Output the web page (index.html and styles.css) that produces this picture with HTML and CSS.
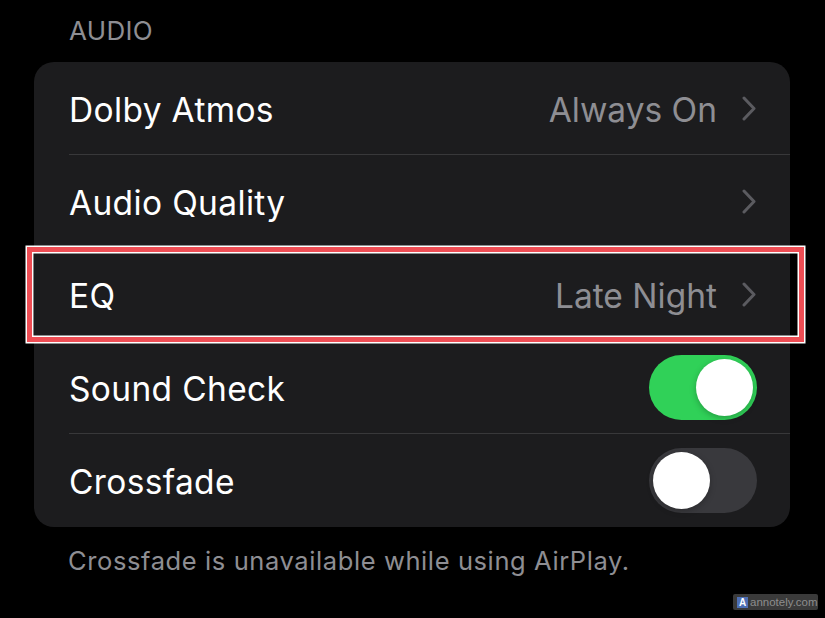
FILE: index.html
```html
<!DOCTYPE html>
<html lang="en">
<head>
<meta charset="utf-8">
<title>Audio Settings</title>
<link rel="stylesheet" href="styles.css">
</head>
<body>
<div class="page">
  <div class="section-header">AUDIO</div>
  <div class="card">
    <div class="row">
      <div class="row-inner">
        <span class="label">Dolby Atmos</span>
        <span class="accessory"><span class="value">Always On</span><svg class="chevron" viewBox="0 0 14 25" width="14" height="25"><path d="M2 2 L12 12.5 L2 23" fill="none" stroke="#5b5b60" stroke-width="3" stroke-linecap="round" stroke-linejoin="round"/></svg></span>
      </div>
    </div>
    <div class="row">
      <div class="row-inner">
        <span class="label">Audio Quality</span>
        <span class="accessory"><svg class="chevron" viewBox="0 0 14 25" width="14" height="25"><path d="M2 2 L12 12.5 L2 23" fill="none" stroke="#5b5b60" stroke-width="3" stroke-linecap="round" stroke-linejoin="round"/></svg></span>
      </div>
    </div>
    <div class="row row-highlighted">
      <div class="row-inner">
        <span class="label">EQ</span>
        <span class="accessory"><span class="value">Late Night</span><svg class="chevron" viewBox="0 0 14 25" width="14" height="25"><path d="M2 2 L12 12.5 L2 23" fill="none" stroke="#5b5b60" stroke-width="3" stroke-linecap="round" stroke-linejoin="round"/></svg></span>
      </div>
      <div class="highlight-box"></div>
    </div>
    <div class="row">
      <div class="row-inner">
        <span class="label">Sound Check</span>
        <span class="toggle toggle-on"><span class="thumb"></span></span>
      </div>
    </div>
    <div class="row row-last">
      <div class="row-inner">
        <span class="label">Crossfade</span>
        <span class="toggle toggle-off"><span class="thumb"></span></span>
      </div>
    </div>
  </div>
  <div class="section-footer">Crossfade is unavailable while using AirPlay.</div>
  <div class="watermark"><span class="wm-icon">A</span><span class="wm-text">annotely.com</span></div>
</div>
</body>
</html>
```
FILE: styles.css
```css
* { box-sizing: border-box; }
html, body {
  margin: 0;
  padding: 0;
  background: #000;
}
body {
  font-family: Inter, "Noto Sans", "Liberation Sans", sans-serif;
  color: #fff;
  width: 825px;
  height: 618px;
  overflow: hidden;
}
.page {
  position: relative;
  width: 825px;
  height: 618px;
}
.section-header {
  padding: 18px 0 0 69px;
  font-size: 26px;
  line-height: 26px;
  color: #8e8e93;
  margin-bottom: 18px;
  letter-spacing: 0.3px;
}
.card {
  margin: 0 35px 0 34px;
  background: #1c1c1e;
  border-radius: 20px;
}
.row {
  position: relative;
  height: 93px;
  padding-left: 35px;
  display: flex;
}
.row-inner {
  flex: 1;
  display: flex;
  align-items: center;
  justify-content: space-between;
  padding-right: 34px;
  padding-top: 3px;
  border-bottom: 1px solid #38383a;
}
.row-last .row-inner { border-bottom: none; }
.label {
  font-size: 33.5px;
  letter-spacing: 0.35px;
}
.accessory {
  display: flex;
  align-items: center;
  gap: 25px;
}
.value {
  font-size: 33.5px;
  color: #8e8e93;
  letter-spacing: 0px;
}
.chevron { display: block; margin-top: -2px; }
.toggle {
  position: relative;
  display: flex;
  align-items: center;
  width: 108px;
  height: 65px;
  border-radius: 33px;
  padding: 4px;
  margin-right: -1px;
  margin-top: -3px;
}
.toggle-on { background: #30d158; justify-content: flex-end; }
.toggle-off { background: #39393d; justify-content: flex-start; }
.thumb {
  width: 57px;
  height: 57px;
  border-radius: 50%;
  background: #fff;
  box-shadow: 0 2px 6px rgba(0,0,0,0.25);
}
.highlight-box {
  position: absolute;
  top: -1px;
  left: -7.5px;
  right: -13.5px;
  bottom: -0.5px;
  border: 5px solid #ee4d54;
  box-shadow: 0 0 0 1.5px #fff, inset 0 0 0 1.5px #fff;
  pointer-events: none;
}
.section-footer {
  margin-top: 21px;
  padding-left: 68px;
  font-size: 25.5px;
  line-height: 25px;
  color: #8e8e93;
  letter-spacing: 0.6px;
}
.watermark {
  position: absolute;
  left: 733px;
  top: 594px;
  width: 85px;
  height: 16px;
  background: #3a3a3a;
  border-radius: 2px;
  display: flex;
  align-items: center;
  gap: 2px;
  padding-left: 4px;
}
.wm-icon {
  flex: none;
  width: 11px;
  height: 11px;
  background: #4d6fb4;
  color: #fff;
  font-family: "Liberation Sans", sans-serif;
  font-size: 10px;
  line-height: 11px;
  font-weight: 700;
  text-align: center;
}
.wm-text {
  font-family: "Liberation Sans", sans-serif;
  font-size: 11.5px;
  line-height: 16px;
  color: #8d8d8d;
  white-space: nowrap;
}
```
